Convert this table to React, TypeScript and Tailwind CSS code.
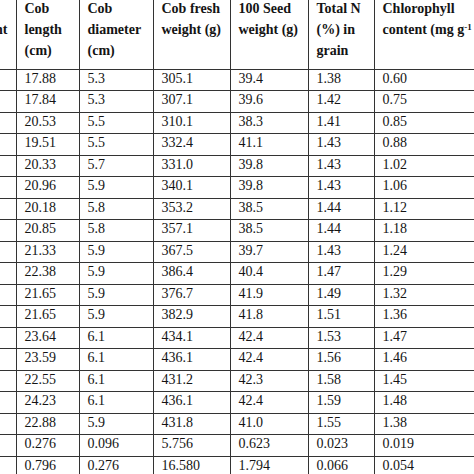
const rows: string[][] = [
  ["17.88", "5.3", "305.1", "39.4", "1.38", "0.60"],
  ["17.84", "5.3", "307.1", "39.6", "1.42", "0.75"],
  ["20.53", "5.5", "310.1", "38.3", "1.41", "0.85"],
  ["19.51", "5.5", "332.4", "41.1", "1.43", "0.88"],
  ["20.33", "5.7", "331.0", "39.8", "1.43", "1.02"],
  ["20.96", "5.9", "340.1", "39.8", "1.43", "1.06"],
  ["20.18", "5.8", "353.2", "38.5", "1.44", "1.12"],
  ["20.85", "5.8", "357.1", "38.5", "1.44", "1.18"],
  ["21.33", "5.9", "367.5", "39.7", "1.43", "1.24"],
  ["22.38", "5.9", "386.4", "40.4", "1.47", "1.29"],
  ["21.65", "5.9", "376.7", "41.9", "1.49", "1.32"],
  ["21.65", "5.9", "382.9", "41.8", "1.51", "1.36"],
  ["23.64", "6.1", "434.1", "42.4", "1.53", "1.47"],
  ["23.59", "6.1", "436.1", "42.4", "1.56", "1.46"],
  ["22.55", "6.1", "431.2", "42.3", "1.58", "1.45"],
  ["24.23", "6.1", "436.1", "42.4", "1.59", "1.48"],
  ["22.88", "5.9", "431.8", "41.0", "1.55", "1.38"],
  ["0.276", "0.096", "5.756", "0.623", "0.023", "0.019"],
  ["0.796", "0.276", "16.580", "1.794", "0.066", "0.054"],
];

const widths = ["w-[16px]", "w-[63px]", "w-[74px]", "w-[77px]", "w-[78px]", "w-[66px]", "w-[130px]"];

export default function App() {
  return (
    <div className="w-[474px] h-[474px] overflow-hidden bg-white font-['Liberation_Serif',serif] text-[#141414]">
      <table className="-mt-[2px] table-fixed border-collapse w-[504px]">
        <colgroup>
          {widths.map((w, i) => (
            <col key={i} className={w} />
          ))}
        </colgroup>
        <thead>
          <tr className="h-[71px] text-[14px] leading-[21px] font-bold align-top text-left">
            {/* first column is cut by the left edge, only its last letter shows */}
            <th className="border-b-[1.5px] border-r-[1.5px] border-[#333] p-0 pr-[8px]">
              <div className="flex justify-end pt-[21px]">
                <span className="shrink-0 whitespace-nowrap">Treatment</span>
              </div>
            </th>
            <th className="border-b-[1.5px] border-r-[1.5px] border-[#333] p-0 pl-2">
              Cob
              <br />
              length
              <br />
              (cm)
            </th>
            <th className="border-b-[1.5px] border-r-[1.5px] border-[#333] p-0 pl-2">
              Cob
              <br />
              diameter
              <br />
              (cm)
            </th>
            <th className="border-b-[1.5px] border-r-[1.5px] border-[#333] p-0 pl-2 whitespace-nowrap">
              Cob fresh
              <br />
              weight (g)
            </th>
            <th className="border-b-[1.5px] border-r-[1.5px] border-[#333] p-0 pl-2 whitespace-nowrap">
              100 Seed
              <br />
              weight (g)
            </th>
            <th className="border-b-[1.5px] border-r-[1.5px] border-[#333] p-0 pl-2 whitespace-nowrap">
              Total N
              <br />
              (%) in
              <br />
              grain
            </th>
            <th className="border-b-[1.5px] border-[#333] p-0 pl-2 whitespace-nowrap">
              Chlorophyll
              <br />
              content (mg g<sup className="text-[9px]">-1</sup> FW)
            </th>
          </tr>
        </thead>
        <tbody>
          {rows.map((r, i) => (
            <tr key={i} className="h-[21.5px] text-[14px] leading-[17px] align-top">
              <td className="border-b-[1.5px] border-r-[1.5px] border-[#333] p-0" />
              {r.map((v, j) => (
                <td
                  key={j}
                  className={
                    j === 5
                      ? "border-b-[1.5px] border-[#333] p-0 pl-2 whitespace-nowrap"
                      : "border-b-[1.5px] border-r-[1.5px] border-[#333] p-0 pl-2 whitespace-nowrap"
                  }
                >
                  {v}
                </td>
              ))}
            </tr>
          ))}
        </tbody>
      </table>
    </div>
  );
}
